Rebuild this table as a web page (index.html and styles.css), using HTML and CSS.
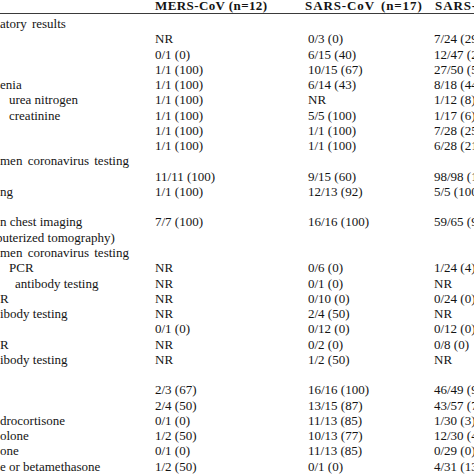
FILE: index.html
```html
<!DOCTYPE html>
<html>
<head>
<meta charset="utf-8">
<link rel="stylesheet" href="styles.css">
</head>
<body>
<div class="table">
  <div class="row head">
    <div class="c1"></div>
    <div class="c2 mers">MERS-CoV (n=12)</div>
    <div class="c3 sars">SARS-CoV (n=17)</div>
    <div class="c4 sars2">SARS-CoV-2 (n=50)</div>
  </div>
  <div class="body">
    <div class="row"><div class="c1 wide">atory results</div><div class="c2"></div><div class="c3"></div><div class="c4"></div></div>
    <div class="row"><div class="c1"></div><div class="c2">NR</div><div class="c3">0/3 (0)</div><div class="c4">7/24 (29)</div></div>
    <div class="row"><div class="c1"></div><div class="c2">0/1 (0)</div><div class="c3">6/15 (40)</div><div class="c4">12/47 (26)</div></div>
    <div class="row"><div class="c1"></div><div class="c2">1/1 (100)</div><div class="c3">10/15 (67)</div><div class="c4">27/50 (54)</div></div>
    <div class="row"><div class="c1">enia</div><div class="c2">1/1 (100)</div><div class="c3">6/14 (43)</div><div class="c4">8/18 (44)</div></div>
    <div class="row"><div class="c1 in9">urea nitrogen</div><div class="c2">1/1 (100)</div><div class="c3">NR</div><div class="c4">1/12 (8)</div></div>
    <div class="row"><div class="c1 in9">creatinine</div><div class="c2">1/1 (100)</div><div class="c3">5/5 (100)</div><div class="c4">1/17 (6)</div></div>
    <div class="row"><div class="c1"></div><div class="c2">1/1 (100)</div><div class="c3">1/1 (100)</div><div class="c4">7/28 (25)</div></div>
    <div class="row"><div class="c1"></div><div class="c2">1/1 (100)</div><div class="c3">1/1 (100)</div><div class="c4">6/28 (21)</div></div>
    <div class="row"><div class="c1 wide">men coronavirus testing</div><div class="c2"></div><div class="c3"></div><div class="c4"></div></div>
    <div class="row"><div class="c1"></div><div class="c2">11/11 (100)</div><div class="c3">9/15 (60)</div><div class="c4">98/98 (100)</div></div>
    <div class="row"><div class="c1">ng</div><div class="c2">1/1 (100)</div><div class="c3">12/13 (92)</div><div class="c4">5/5 (100)</div></div>
    <div class="row"><div class="c1"></div><div class="c2"></div><div class="c3"></div><div class="c4"></div></div>
    <div class="row"><div class="c1">n chest imaging</div><div class="c2">7/7 (100)</div><div class="c3">16/16 (100)</div><div class="c4">59/65 (91)</div></div>
    <div class="row"><div class="c1 neg">puterized tomography)</div><div class="c2"></div><div class="c3"></div><div class="c4"></div></div>
    <div class="row"><div class="c1 wide">men coronavirus testing</div><div class="c2"></div><div class="c3"></div><div class="c4"></div></div>
    <div class="row"><div class="c1 in9">PCR</div><div class="c2">NR</div><div class="c3">0/6 (0)</div><div class="c4">1/24 (4)</div></div>
    <div class="row"><div class="c1 in15">antibody testing</div><div class="c2">NR</div><div class="c3">0/1 (0)</div><div class="c4">NR</div></div>
    <div class="row"><div class="c1">R</div><div class="c2">NR</div><div class="c3">0/10 (0)</div><div class="c4">0/24 (0)</div></div>
    <div class="row"><div class="c1">ibody testing</div><div class="c2">NR</div><div class="c3">2/4 (50)</div><div class="c4">NR</div></div>
    <div class="row"><div class="c1"></div><div class="c2">0/1 (0)</div><div class="c3">0/12 (0)</div><div class="c4">0/12 (0)</div></div>
    <div class="row"><div class="c1">R</div><div class="c2">NR</div><div class="c3">0/2 (0)</div><div class="c4">0/8 (0)</div></div>
    <div class="row"><div class="c1">ibody testing</div><div class="c2">NR</div><div class="c3">1/2 (50)</div><div class="c4">NR</div></div>
    <div class="row"><div class="c1"></div><div class="c2"></div><div class="c3"></div><div class="c4"></div></div>
    <div class="row"><div class="c1"></div><div class="c2">2/3 (67)</div><div class="c3">16/16 (100)</div><div class="c4">46/49 (94)</div></div>
    <div class="row"><div class="c1"></div><div class="c2">2/4 (50)</div><div class="c3">13/15 (87)</div><div class="c4">43/57 (75)</div></div>
    <div class="row"><div class="c1">drocortisone</div><div class="c2">0/1 (0)</div><div class="c3">11/13 (85)</div><div class="c4">1/30 (3)</div></div>
    <div class="row"><div class="c1">olone</div><div class="c2">1/2 (50)</div><div class="c3">10/13 (77)</div><div class="c4">12/30 (40)</div></div>
    <div class="row"><div class="c1">one</div><div class="c2">0/1 (0)</div><div class="c3">11/13 (85)</div><div class="c4">0/29 (0)</div></div>
    <div class="row"><div class="c1">e or betamethasone</div><div class="c2">1/2 (50)</div><div class="c3">0/1 (0)</div><div class="c4">4/31 (13)</div></div>
  </div>
</div>
</body>
</html>
```

FILE: styles.css
```css
html, body {
  margin: 0;
  padding: 0;
  background: #ffffff;
  overflow: hidden;
}
body {
  width: 474px;
  height: 474px;
  font-family: "Liberation Serif", "Times New Roman", serif;
  font-size: 13px;
  color: #141414;
}
.table {
  width: 600px;
}
.row {
  display: grid;
  grid-template-columns: 155px 153px 126px 166px;
  height: 15.28px;
  line-height: 15.28px;
  white-space: nowrap;
}
.head {
  height: 13px;
  line-height: 11px;
  font-weight: bold;
  border-bottom: 1px solid #3a3a3a;
}
.mers {
  letter-spacing: 0.4px;
}
.sars {
  margin-left: -3px;
  letter-spacing: 0.9px;
  word-spacing: 2px;
}
.sars2 {
  margin-left: 1px;
  letter-spacing: 0.9px;
}
.body {
  padding-top: 2px;
}
.c1.wide {
  word-spacing: 2px;
}
.in9 {
  padding-left: 9px;
}
.in15 {
  padding-left: 15px;
}
.neg {
  text-indent: -4px;
}
```
